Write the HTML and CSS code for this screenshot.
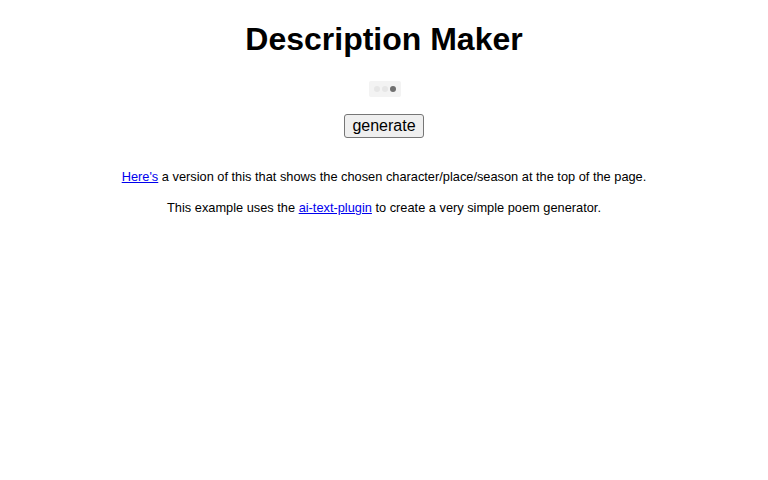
FILE: index.html
```html
<!DOCTYPE html>
<html>
<head>
<meta charset="utf-8">
<link rel="stylesheet" href="styles.css">
</head>
<body>
<main class="page">
  <h1 class="title">Description Maker</h1>
  <div class="loader"><span class="dot"></span><span class="dot"></span><span class="dot dark"></span></div>
  <button class="gen">generate</button>
  <p class="note"><a href="#">Here's</a> a version of this that shows the chosen character/place/season at the top of the page.</p>
  <p class="note">This example uses the <a href="#">ai-text-plugin</a> to create a very simple poem generator.</p>
</main>
</body>
</html>
```
FILE: styles.css
```css
html, body { margin: 0; padding: 0; background: #fff; }
body { font-family: "Liberation Sans", Arial, sans-serif; color: #000; }
.page { display: flex; flex-direction: column; align-items: center; padding-top: 21px; }
.title { font-size: 32px; font-weight: bold; margin: 0; line-height: 37px; }
.loader { margin-top: 23px; margin-left: 2px; width: 32px; height: 16px; background: #f3f3f3; border-radius: 2px; display: flex; align-items: center; justify-content: center; gap: 2px; }
.dot { width: 6px; height: 6px; border-radius: 50%; background: #e6e6e6; }
.dot.dark { background: #707070; }
.gen { margin-top: 17px; font-family: "Liberation Sans", Arial, sans-serif; font-size: 16px; height: 24px; padding: 1px 7px; background: #efefef; border: 1px solid #767676; border-radius: 3px; color: #000; }
.note { font-size: 12.8px; margin: 0; line-height: 15px; }
.note:first-of-type { margin-top: 31px; }
.note + .note { margin-top: 16px; }
a { color: #00e; }
```
